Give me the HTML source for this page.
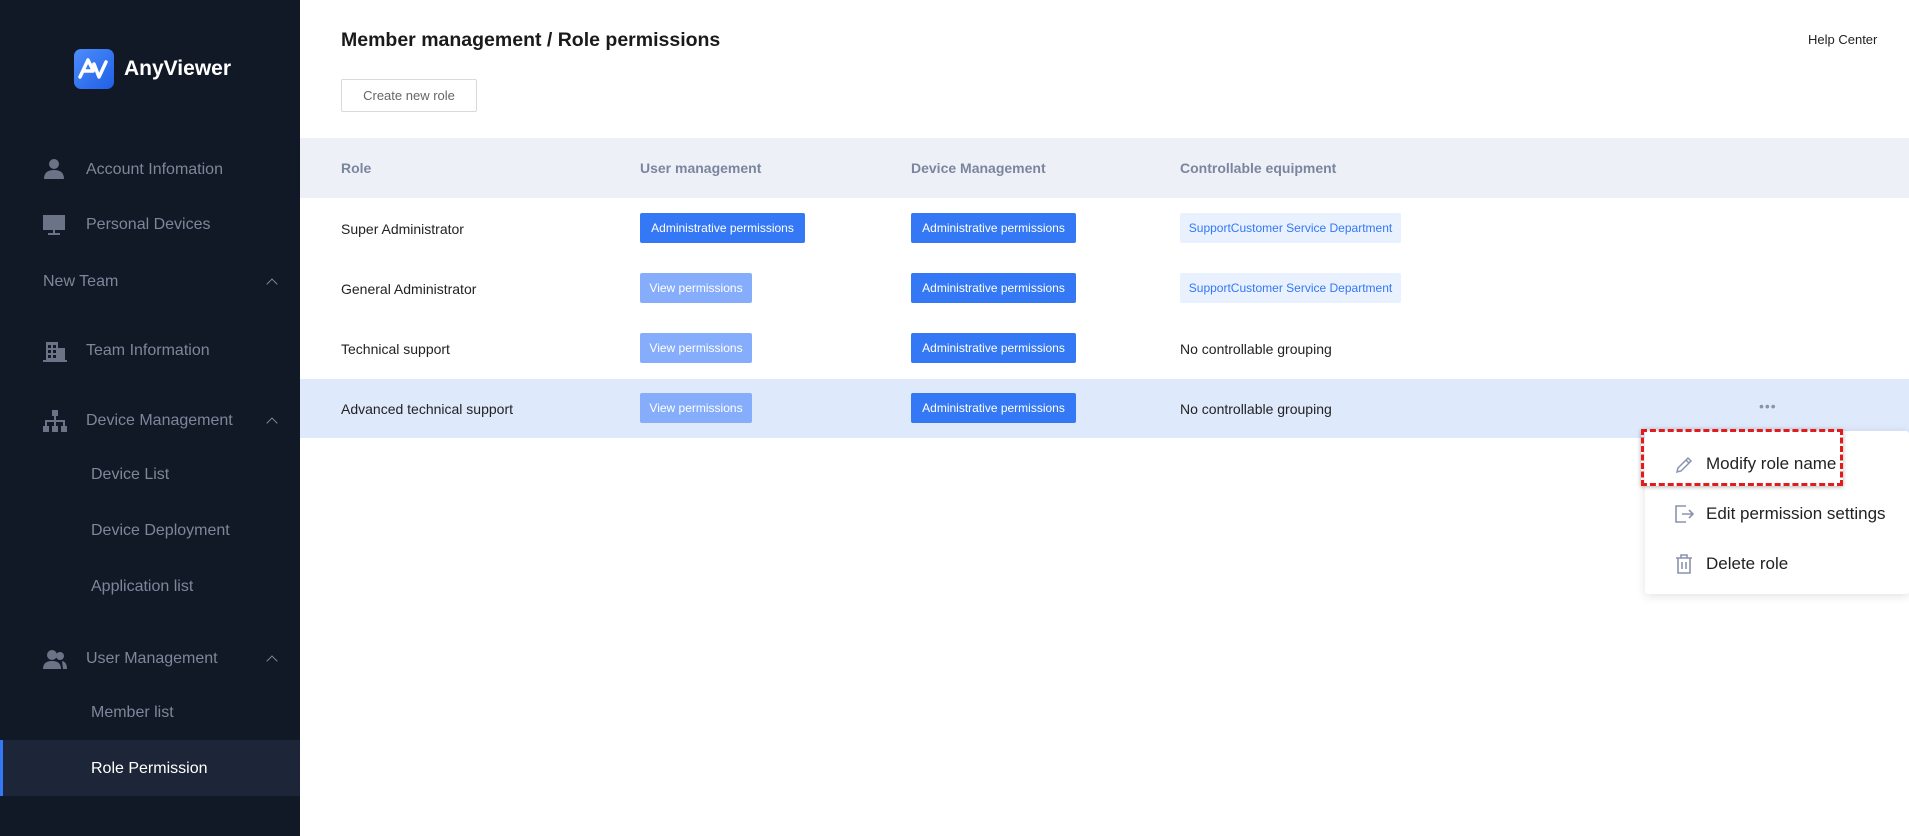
<!DOCTYPE html>
<html><head><meta charset="utf-8"><style>
*{margin:0;padding:0;box-sizing:border-box}
body{width:1909px;height:836px;overflow:hidden;font-family:"Liberation Sans",sans-serif;background:#fff;position:relative}
.sb{position:absolute;left:0;top:0;width:300px;height:836px;background:#111826}
.logo{position:absolute;left:74px;top:49px;width:40px;height:40px;border-radius:7px;background:linear-gradient(135deg,#4d8dfb,#1f5fe6)}
.brand{position:absolute;left:124px;top:57px;color:#fff;font-weight:bold;font-size:21px}
.mi{position:absolute;left:86px;color:#7e879a;font-size:16px;line-height:20px}
.sub{left:91px}
.ic{position:absolute;left:43px}
.chev{position:absolute;left:268px;width:8px;height:8px;border-left:1.5px solid #7e879a;border-top:1.5px solid #7e879a;transform:rotate(45deg)}
.t{position:absolute;white-space:nowrap}
.btn{position:absolute;height:30px;border-radius:2px;color:#fff;font-size:12px;line-height:30px;text-align:center}
.adm{width:165px;background:#3478f6}
.view{width:112px;background:#85adfc}
.tag{position:absolute;width:221px;height:30px;line-height:30px;text-align:center;background:#e9f1fe;color:#3478f6;font-size:12px;border-radius:2px}
.rt{position:absolute;font-size:14px;color:#222;line-height:20px}
.dd{position:absolute;left:1645px;top:431px;width:264px;height:163px;background:#fff;box-shadow:0 2px 10px rgba(0,0,0,.12);border-radius:3px}
.di{position:absolute;left:61px;font-size:17px;color:#222;line-height:20px}
</style></head><body>
<div class="sb">
 <div class="logo"><svg width="40" height="40" viewBox="0 0 40 40"><path d="M6 28 L14 11 L19 21 M10 22 H19 M20 15 L25 28 L32 13" fill="none" stroke="#fff" stroke-width="3.5" stroke-linejoin="round" stroke-linecap="round"/></svg></div>
 <div class="brand">AnyViewer</div>
 <svg class="ic" style="top:158px" width="22" height="22" viewBox="0 0 22 22"><circle cx="11" cy="6" r="5" fill="#6b7487"/><path d="M1 21 Q1 12 11 12 Q21 12 21 21Z" fill="#6b7487"/></svg>
 <div class="mi" style="top:160px">Account Infomation</div>
 <svg class="ic" style="top:214px" width="22" height="22" viewBox="0 0 22 22"><rect x="0" y="1" width="22" height="15" fill="#6b7487"/><rect x="10" y="16" width="2" height="3" fill="#6b7487"/><rect x="5" y="19" width="12" height="2" fill="#6b7487"/></svg>
 <div class="mi" style="top:215px">Personal Devices</div>
 <div class="mi" style="left:43px;top:272px">New Team</div><div class="chev" style="top:280px"></div>
 <svg class="ic" style="top:340px" width="24" height="22" viewBox="0 0 24 22"><rect x="3" y="2" width="12" height="18" fill="#6b7487"/><rect x="15" y="8" width="7" height="12" fill="#6b7487"/><rect x="0" y="20" width="24" height="2" fill="#6b7487"/><g fill="#111826"><rect x="5" y="5" width="3" height="3"/><rect x="10" y="5" width="3" height="3"/><rect x="5" y="10" width="3" height="3"/><rect x="10" y="10" width="3" height="3"/><rect x="5" y="15" width="3" height="3"/><rect x="10" y="15" width="3" height="3"/></g></svg>
 <div class="mi" style="top:341px">Team Information</div>
 <svg class="ic" style="top:410px" width="24" height="22" viewBox="0 0 24 22"><rect x="9" y="0" width="6" height="6" fill="#6b7487"/><path d="M12 6V11M3 16V11H21V16M12 11V16" stroke="#6b7487" stroke-width="2" fill="none"/><rect x="0" y="16" width="6" height="6" fill="#6b7487"/><rect x="9" y="16" width="6" height="6" fill="#6b7487"/><rect x="18" y="16" width="6" height="6" fill="#6b7487"/></svg>
 <div class="mi" style="top:411px">Device Management</div><div class="chev" style="top:419px"></div>
 <div class="mi sub" style="top:465px">Device List</div>
 <div class="mi sub" style="top:521px">Device Deployment</div>
 <div class="mi sub" style="top:577px">Application list</div>
 <svg class="ic" style="top:649px" width="24" height="22" viewBox="0 0 24 22"><circle cx="9" cy="6" r="5" fill="#6b7487"/><path d="M0 20 Q0 12 9 12 Q18 12 18 20Z" fill="#6b7487"/><circle cx="17" cy="7" r="4" fill="#6b7487"/><path d="M19 12 Q24 13 24 20H20Z" fill="#6b7487"/></svg>
 <div class="mi" style="top:649px">User Management</div><div class="chev" style="top:657px"></div>
 <div class="mi sub" style="top:703px">Member list</div>
 <div style="position:absolute;left:0;top:740px;width:300px;height:56px;background:#1d2639;border-left:3px solid #3478f6"></div>
 <div class="mi sub" style="top:759px;color:#fff">Role Permission</div>
</div>
<div class="t" style="left:341px;top:29px;font-size:19.5px;font-weight:bold;color:#1a1a1a">Member management / Role permissions</div>
<div class="t" style="left:1808px;top:32px;font-size:13px;color:#222">Help Center</div>
<div style="position:absolute;left:341px;top:79px;width:136px;height:33px;border:1px solid #d9d9d9;border-radius:2px;font-size:13px;color:#666;text-align:center;line-height:31px">Create new role</div>
<div style="position:absolute;left:300px;top:138px;width:1609px;height:60px;background:#edf0f7"></div>
<div class="t" style="left:341px;top:160px;font-size:14px;font-weight:bold;color:#7b869e">Role</div>
<div class="t" style="left:640px;top:160px;font-size:14px;font-weight:bold;color:#7b869e">User management</div>
<div class="t" style="left:911px;top:160px;font-size:14px;font-weight:bold;color:#7b869e">Device Management</div>
<div class="t" style="left:1180px;top:160px;font-size:14px;font-weight:bold;color:#7b869e">Controllable equipment</div>
<div style="position:absolute;left:300px;top:379px;width:1609px;height:59px;background:#dfe9fc"></div>

<div class="rt" style="left:341px;top:219px">Super Administrator</div>
<div class="btn adm" style="left:640px;top:213px">Administrative permissions</div>
<div class="btn adm" style="left:911px;top:213px">Administrative permissions</div>
<div class="tag" style="left:1180px;top:213px">SupportCustomer Service Department</div>

<div class="rt" style="left:341px;top:279px">General Administrator</div>
<div class="btn view" style="left:640px;top:273px">View permissions</div>
<div class="btn adm" style="left:911px;top:273px">Administrative permissions</div>
<div class="tag" style="left:1180px;top:273px">SupportCustomer Service Department</div>

<div class="rt" style="left:341px;top:339px">Technical support</div>
<div class="btn view" style="left:640px;top:333px">View permissions</div>
<div class="btn adm" style="left:911px;top:333px">Administrative permissions</div>
<div class="rt" style="left:1180px;top:339px">No controllable grouping</div>

<div class="rt" style="left:341px;top:399px">Advanced technical support</div>
<div class="btn view" style="left:640px;top:393px">View permissions</div>
<div class="btn adm" style="left:911px;top:393px">Administrative permissions</div>
<div class="rt" style="left:1180px;top:399px">No controllable grouping</div>
<div class="t" style="left:1759px;top:398px;font-size:14px;color:#8a93a8;letter-spacing:1px">•••</div>

<div class="dd">
 <svg style="position:absolute;left:29px;top:24px" width="20" height="20" viewBox="0 0 20 20"><path d="M3 17 L4 13 L14 3 L17 6 L7 16 Z M12 5 L15 8" fill="none" stroke="#8a93b0" stroke-width="1.5"/></svg>
 <div class="di" style="top:23px">Modify role name</div>
 <svg style="position:absolute;left:29px;top:73px" width="20" height="20" viewBox="0 0 20 20"><path d="M12 2H2V18H12M8 10H19M15 6L19 10L15 14" fill="none" stroke="#8a93b0" stroke-width="1.6"/></svg>
 <div class="di" style="top:73px">Edit permission settings</div>
 <svg style="position:absolute;left:29px;top:123px" width="20" height="20" viewBox="0 0 20 20"><path d="M2 4H18M7 4V1H13V4M4 4V19H16V4M8 8V15M12 8V15" fill="none" stroke="#8a93b0" stroke-width="1.6"/></svg>
 <div class="di" style="top:123px">Delete role</div>
</div>
<div style="position:absolute;left:1641px;top:429px;width:202px;height:57px;border:3px dashed #e31b1b;box-shadow:0 1px 4px rgba(0,0,0,.3)"></div>
</body></html>
